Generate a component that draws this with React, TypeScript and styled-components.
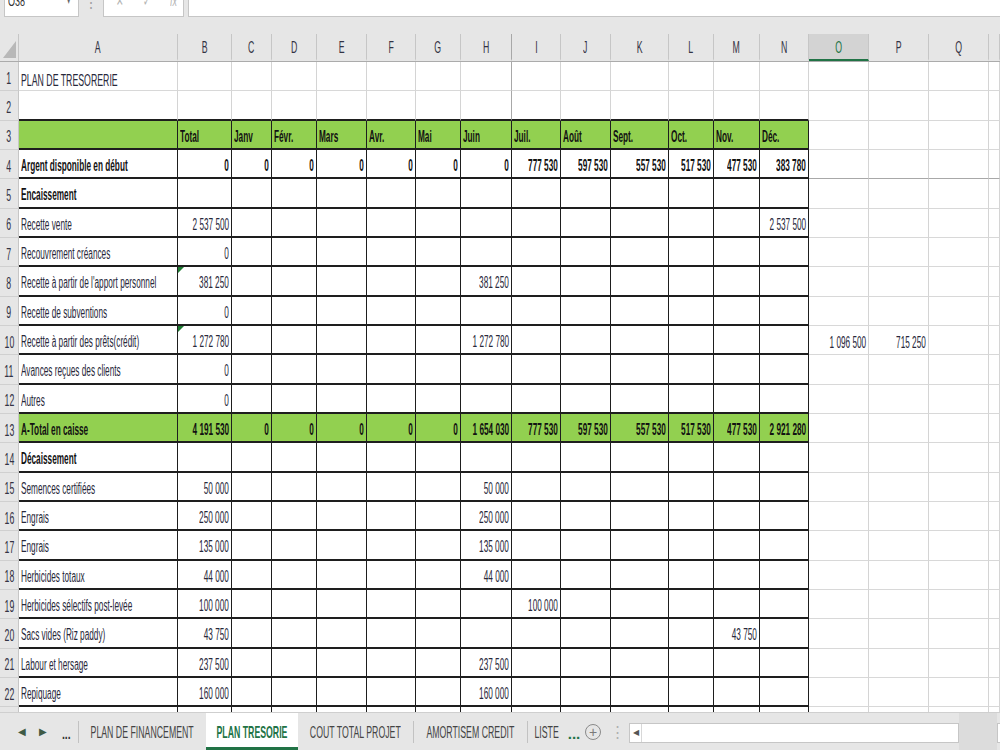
import React from 'react';
import styled, { createGlobalStyle } from 'styled-components';

const FONT = `"Liberation Sans", Arial, sans-serif`;
const COLS = [19, 159, 54, 40, 45, 50, 49, 45, 51, 49, 50, 58, 45, 46, 49, 60, 60, 60, 11];
const TEMPLATE = COLS.map((c) => `${c}px`).join(' ');
const LETTERS = ['A', 'B', 'C', 'D', 'E', 'F', 'G', 'H', 'I', 'J', 'K', 'L', 'M', 'N', 'O', 'P', 'Q', ''];
const BOX_LAST = 13; // column N index (0 = A)
const SEL_COL = 14; // column O

const GlobalStyle = createGlobalStyle`
  html, body { margin: 0; padding: 0; width: 1000px; height: 750px; overflow: hidden; background: #e6e6e6; }
  #root { width: 1000px; height: 750px; }
  * { box-sizing: border-box; }
`;

const Frame = styled.div`
  width: 1000px;
  height: 750px;
  display: flex;
  flex-direction: column;
  background: #e6e6e6;
  font-family: ${FONT};
  overflow: hidden;
`;

/* ---------- formula bar ---------- */
const TopBar = styled.div`
  display: flex;
  height: 17px;
  margin-bottom: 17px;
  padding-left: 4px;
  flex-shrink: 0;
`;
const NameBox = styled.div`
  width: 75px;
  background: #fff;
  border: 1px solid #c6c6c6;
  border-top: none;
  overflow: hidden;
  display: flex;
  justify-content: space-between;
  padding: 0 5px 0 3px;
`;
const Clipped = styled.span<{ $color?: string; $size?: number }>`
  display: inline-block;
  margin-top: -7px;
  font-size: ${(p) => p.$size ?? 15}px;
  line-height: 15px;
  color: ${(p) => p.$color ?? '#333'};
  transform: scaleX(0.6);
  transform-origin: left;
  white-space: nowrap;
`;
const Dots = styled.div`
  width: 24px;
  overflow: hidden;
  display: flex;
  justify-content: center;
  color: #a0a0a0;
  font-size: 14px;
  line-height: 14px;
  & > span { margin-top: -4px; }
`;
const FxBox = styled.div`
  width: 81px;
  background: #fff;
  border: 1px solid #c6c6c6;
  border-top: none;
  overflow: hidden;
  display: flex;
  align-items: flex-start;
  gap: 14px;
  padding-left: 12px;
`;
const FormulaInput = styled.div`
  flex: 1;
  margin-left: 4px;
  background: #fff;
  border: 1px solid #c6c6c6;
  border-top: none;
  border-right: none;
`;

/* ---------- sheet ---------- */
const Sheet = styled.div`
  flex: 1;
  overflow: hidden;
  display: flex;
  flex-direction: column;
`;
const HeadRow = styled.div`
  display: grid;
  grid-template-columns: ${TEMPLATE};
  height: 28px;
  flex-shrink: 0;
  border-bottom: 1px solid #ababab;
`;
const Corner = styled.div`
  position: relative;
  border-right: 1px solid #c6c6c6;
  &::after {
    content: '';
    position: absolute;
    right: 2px;
    bottom: 3px;
    border-style: solid;
    border-width: 0 0 17px 13px;
    border-color: transparent transparent #b8b8b8 transparent;
  }
`;
const ColHead = styled.div<{ $sel?: boolean; $brk?: boolean }>`
  display: flex;
  align-items: center;
  justify-content: center;
  background: ${(p) => (p.$sel ? '#d3d3d3' : '#e6e6e6')};
  border-right: 1px solid ${(p) => (p.$brk ? '#a8a8a8' : '#c6c6c6')};
  border-bottom: 2px solid ${(p) => (p.$sel ? '#217346' : 'transparent')};
  color: ${(p) => (p.$sel ? '#217346' : '#333344')};
  font-size: 17px;
  padding-top: 2px;
`;
const Row = styled.div<{ $h?: number }>`
  display: grid;
  grid-template-columns: ${TEMPLATE};
  height: ${(p) => p.$h ?? 29.33}px;
  flex-shrink: 0;
`;
const RowHead = styled.div`
  display: flex;
  align-items: center;
  justify-content: center;
  background: #e6e6e6;
  border-right: 1px solid #c6c6c6;
  border-bottom: 1px solid #d0d0d0;
  color: #333344;
  font-size: 17px;
  padding-top: 4px;
`;
const Cell = styled.div<{
  $fill?: boolean;
  $box?: boolean;
  $boxTop?: boolean;
  $right?: boolean;
  $bold?: boolean;
  $big?: boolean;
  $brk?: boolean;
  $brkH?: boolean;
  $tri?: boolean;
}>`
  position: relative;
  display: flex;
  align-items: center;
  justify-content: ${(p) => (p.$right ? 'flex-end' : 'flex-start')};
  padding: ${(p) => (p.$big ? '8px' : '5px')} 2px 0;
  min-width: 0;
  white-space: nowrap;
  background: ${(p) => (p.$fill ? '#92d050' : '#fff')};
  border-right: 1px solid ${(p) => (p.$box ? '#1e1e1e' : p.$brk ? '#a8a8a8' : '#d4d4d4')};
  border-bottom: ${(p) =>
    p.$box || p.$boxTop ? '2px solid #1e1e1e' : p.$brkH ? '1px solid #a8a8a8' : '1px solid #d8d8d8'};
  font-size: ${(p) => (p.$big ? 17 : 16)}px;
  font-weight: ${(p) => (p.$bold ? 700 : 400)};
  color: ${(p) => (p.$bold ? '#121212' : '#28283a')};
  &::before {
    content: '';
    display: ${(p) => (p.$tri ? 'block' : 'none')};
    position: absolute;
    left: 0;
    top: 0;
    border-style: solid;
    border-width: 6px 6px 0 0;
    border-color: #1e7c32 transparent transparent transparent;
  }
`;
const Txt = styled.span<{ $right?: boolean; $center?: boolean }>`
  display: inline-block;
  flex-shrink: 0;
  line-height: 1;
  transform: scaleX(0.515);
  transform-origin: ${(p) => (p.$right ? 'right' : p.$center ? 'center' : 'left')};
`;

/* ---------- tabs bar ---------- */
const TabBar = styled.div`
  height: 38px;
  flex-shrink: 0;
  display: flex;
  align-items: stretch;
  background: #e6e6e6;
  border-top: 1px solid #cfcfcf;
`;
const Nav = styled.div`
  width: 78px;
  display: flex;
  align-items: center;
  padding-left: 18px;
  gap: 13px;
  color: #3f5a45;
  font-size: 10px;
`;
const NavDots = styled.span`
  font-size: 15px;
  font-weight: 700;
  color: #333;
  transform: scaleX(0.7);
  margin-top: 4px;
`;
const Sep = styled.div`
  width: 1px;
  align-self: center;
  height: 22px;
  background: #c2c2c2;
  flex-shrink: 0;
`;
const Tab = styled.div<{ $w: number; $active?: boolean }>`
  width: ${(p) => p.$w}px;
  flex-shrink: 0;
  display: flex;
  align-items: center;
  justify-content: center;
  font-size: 17px;
  padding-top: ${(p) => (p.$active ? 5 : 2)}px;
  white-space: nowrap;
  background: ${(p) => (p.$active ? '#fff' : 'transparent')};
  color: ${(p) => (p.$active ? '#217346' : '#444')};
  font-weight: ${(p) => (p.$active ? 700 : 400)};
  border-bottom: ${(p) => (p.$active ? '3px solid #217346' : 'none')};
`;
const More = styled.div`
  width: 18px;
  display: flex;
  align-items: center;
  justify-content: center;
  color: #217346;
  font-weight: 700;
  font-size: 15px;
  padding-top: 4px;
`;
const AddBtn = styled.div`
  width: 16px;
  height: 16px;
  margin: 0 4px 0 2px;
  align-self: center;
  border: 1.5px solid #8a8a8a;
  border-radius: 50%;
  display: flex;
  align-items: center;
  justify-content: center;
  color: #7a7a7a;
  font-size: 14px;
  line-height: 1;
`;
const VDots = styled.div`
  width: 24px;
  display: flex;
  align-items: center;
  justify-content: center;
  color: #b0b0b0;
  font-size: 15px;
`;
const Scroll = styled.div`
  width: 330px;
  height: 20px;
  align-self: center;
  margin-top: 2px;
  background: #fff;
  border: 1px solid #c6c6c6;
  display: flex;
`;
const ScrollBtn = styled.div`
  width: 12px;
  border-right: 1px solid #d8d8d8;
  display: flex;
  align-items: center;
  justify-content: center;
  color: #555;
  font-size: 8px;
`;
const ScrollGap = styled.div`
  width: 38px;
  background: #dcdcdc;
`;
const Scroll2 = styled.div`
  flex: 1;
  height: 20px;
  align-self: center;
  margin-top: 2px;
  background: #fff;
  border: 1px solid #c6c6c6;
  border-right: none;
`;

/* ---------- data ---------- */
type RowData = {
  label?: string;
  bold?: boolean;
  fill?: boolean;
  head?: boolean;
  vals?: Record<number, string>;
  tri?: number[];
};

const months = ['Total', 'Janv', 'Févr.', 'Mars', 'Avr.', 'Mai', 'Juin', 'Juil.', 'Août', 'Sept.', 'Oct.', 'Nov.', 'Déc.'];
const headVals: Record<number, string> = {};
months.forEach((m, i) => (headVals[i + 1] = m));

const ROWS: RowData[] = [
  { label: 'PLAN DE TRESORERIE' },
  {},
  { fill: true, head: true, bold: true, vals: headVals },
  {
    label: 'Argent disponible en début',
    bold: true,
    vals: { 1: '0', 2: '0', 3: '0', 4: '0', 5: '0', 6: '0', 7: '0', 8: '777 530', 9: '597 530', 10: '557 530', 11: '517 530', 12: '477 530', 13: '383 780' },
  },
  { label: 'Encaissement', bold: true },
  { label: 'Recette vente', vals: { 1: '2 537 500', 13: '2 537 500' } },
  { label: 'Recouvrement créances', vals: { 1: '0' } },
  { label: "Recette à partir de l'apport personnel", vals: { 1: '381 250', 7: '381 250' }, tri: [1] },
  { label: 'Recette de subventions', vals: { 1: '0' } },
  { label: 'Recette à partir des prêts(crédit)', vals: { 1: '1 272 780', 7: '1 272 780', 14: '1 096 500', 15: '715 250' }, tri: [1] },
  { label: 'Avances reçues des clients', vals: { 1: '0' } },
  { label: 'Autres', vals: { 1: '0' } },
  {
    label: 'A-Total en caisse',
    bold: true,
    fill: true,
    vals: { 1: '4 191 530', 2: '0', 3: '0', 4: '0', 5: '0', 6: '0', 7: '1 654 030', 8: '777 530', 9: '597 530', 10: '557 530', 11: '517 530', 12: '477 530', 13: '2 921 280' },
  },
  { label: 'Décaissement', bold: true },
  { label: 'Semences certifiées', vals: { 1: '50 000', 7: '50 000' } },
  { label: 'Engrais', vals: { 1: '250 000', 7: '250 000' } },
  { label: 'Engrais', vals: { 1: '135 000', 7: '135 000' } },
  { label: 'Herbicides totaux', vals: { 1: '44 000', 7: '44 000' } },
  { label: 'Herbicides sélectifs post-levée', vals: { 1: '100 000', 8: '100 000' } },
  { label: 'Sacs vides (Riz paddy)', vals: { 1: '43 750', 12: '43 750' } },
  { label: 'Labour et hersage', vals: { 1: '237 500', 7: '237 500' } },
  { label: 'Repiquage', vals: { 1: '160 000', 7: '160 000' } },
  {},
];

function SheetRow({ r, idx }: { r: RowData; idx: number }) {
  const n = idx + 1;
  const boxed = n >= 3;
  return (
    <Row>
      <RowHead>
        <Txt $center>{n}</Txt>
      </RowHead>
      {LETTERS.map((_, c) => {
        const inBox = boxed && c <= BOX_LAST;
        const text = c === 0 ? r.label : r.vals?.[c];
        const right = c > 0 && !r.head;
        return (
          <Cell
            key={c}
            $box={inBox}
            $boxTop={n === 2 && c <= BOX_LAST}
            $fill={inBox && r.fill}
            $right={right}
            $bold={inBox && r.bold}
            $big={n === 1 && c === 0}
            $brk={n <= 2 && c === 7}
            $brkH={n === 4 && c > BOX_LAST}
            $tri={r.tri?.includes(c)}
          >
            {text ? <Txt $right={right}>{text}</Txt> : null}
          </Cell>
        );
      })}
    </Row>
  );
}

const TABS: { name: string; w: number; active?: boolean; sepAfter?: boolean }[] = [
  { name: 'PLAN DE FINANCEMENT', w: 127 },
  { name: 'PLAN TRESORIE', w: 92, active: true },
  { name: 'COUT TOTAL PROJET', w: 115, sepAfter: true },
  { name: 'AMORTISEM CREDIT', w: 113, sepAfter: true },
  { name: 'LISTE', w: 37 },
];

export default function App() {
  return (
    <Frame>
      <GlobalStyle />
      <TopBar>
        <NameBox>
          <Clipped>O38</Clipped>
          <Clipped $color="#666" $size={11}>▾</Clipped>
        </NameBox>
        <Dots>
          <span>⋮</span>
        </Dots>
        <FxBox>
          <Clipped $color="#b4b4b4">✕</Clipped>
          <Clipped $color="#b4b4b4">✓</Clipped>
          <Clipped $color="#b4b4b4">
            <i>fx</i>
          </Clipped>
        </FxBox>
        <FormulaInput />
      </TopBar>
      <Sheet>
        <HeadRow>
          <Corner />
          {LETTERS.map((l, i) => (
            <ColHead key={i} $sel={i === SEL_COL} $brk={i === 7}>
              <Txt $center>{l}</Txt>
            </ColHead>
          ))}
        </HeadRow>
        {ROWS.map((r, i) => (
          <SheetRow key={i} r={r} idx={i} />
        ))}
      </Sheet>
      <TabBar>
        <Nav>
          <span>◀</span>
          <span>▶</span>
          <NavDots>...</NavDots>
        </Nav>
        <Sep />
        {TABS.map((t) => (
          <React.Fragment key={t.name}>
            <Tab $w={t.w} $active={t.active}>
              <Txt $center>{t.name}</Txt>
            </Tab>
            {t.sepAfter ? <Sep /> : null}
          </React.Fragment>
        ))}
        <More>...</More>
        <AddBtn>+</AddBtn>
        <VDots>⋮</VDots>
        <Scroll>
          <ScrollBtn>◀</ScrollBtn>
        </Scroll>
        <ScrollGap />
        <Scroll2 />
      </TabBar>
    </Frame>
  );
}
